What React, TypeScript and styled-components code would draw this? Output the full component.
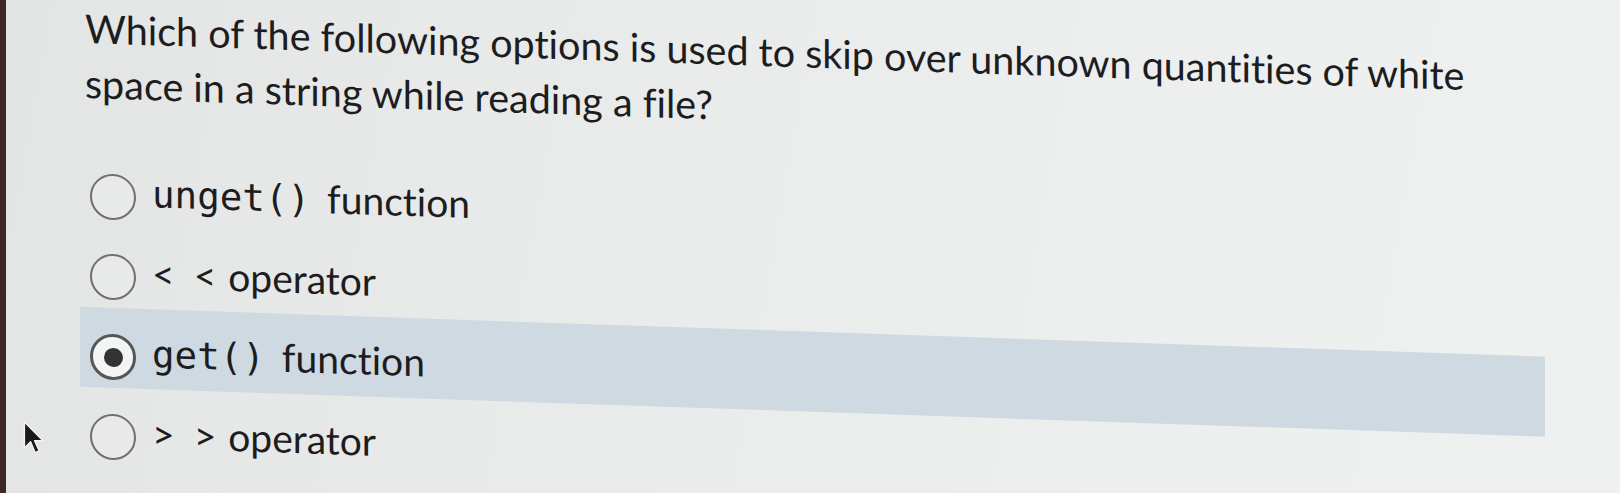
import React from 'react';
import styled, { createGlobalStyle } from 'styled-components';

const GlobalStyle = createGlobalStyle`
  html, body {
    margin: 0;
    padding: 0;
    background: #e8e9e9;
  }
  body {
    font-family: Lato, "Noto Sans", sans-serif;
    font-variant-ligatures: none;
  }
`;

const Page = styled.div`
  position: relative;
  width: 1620px;
  height: 493px;
  overflow: hidden;
  box-sizing: border-box;
  border-left: 6px solid #3f2729;
  background: linear-gradient(100deg, #e3e4e4 0%, #e9eaea 35%, #edeeee 70%, #eff0f0 100%);
`;

const Sheet = styled.div`
  padding-left: 74px;
  transform: skewY(1.95deg);
  transform-origin: 79px 0;
`;

const Question = styled.p`
  margin: 0 0 37px 5px;
  max-width: 1430px;
  font-family: Lato, "Noto Sans", sans-serif;
  font-size: 39.5px;
  line-height: 55px;
  color: #1d1d1f;
  font-variant-ligatures: none;
`;

const Options = styled.div`
  display: flex;
  flex-direction: column;
`;

const Row = styled.div<{ $active?: boolean }>`
  box-sizing: border-box;
  width: 1465px;
  height: 80px;
  display: flex;
  align-items: center;
  gap: 16px;
  padding: 26px 0 8px 10px;
  background: ${(p) => (p.$active ? '#cfd9e2' : 'transparent')};
`;

const Radio = styled.span<{ $checked?: boolean }>`
  box-sizing: border-box;
  flex-shrink: 0;
  width: 46px;
  height: 46px;
  border-radius: 50%;
  border: ${(p) => (p.$checked ? '3px solid #565656' : '2.5px solid #707070')};
  background: ${(p) => (p.$checked ? '#f3f4f4' : 'rgba(255,255,255,0.15)')};
  display: flex;
  align-items: center;
  justify-content: center;
`;

const Dot = styled.span`
  width: 19px;
  height: 19px;
  border-radius: 50%;
  background: #333;
`;

const Label = styled.div`
  padding-bottom: 11px;
  font-family: Lato, "Noto Sans", sans-serif;
  font-size: 39px;
  line-height: 46px;
  color: #1d1d1f;
  white-space: pre;
  font-variant-ligatures: none;
`;

const Code = styled.span`
  margin-right: 7px;
  font-family: "DejaVu Sans Mono", "Liberation Mono", monospace;
  font-size: 37.5px;
`;

const Sym = styled.span<{ $gap: number }>`
  margin-right: ${(p) => p.$gap}px;
`;

const Pointer = styled.svg`
  position: absolute;
  left: 17px;
  top: 421px;
`;

type Option = { code?: string; sym?: string; text: string; checked?: boolean };

const options: Option[] = [
  { code: 'unget()', text: ' function' },
  { sym: '<', text: 'operator' },
  { code: 'get()', text: ' function', checked: true },
  { sym: '>', text: 'operator' },
];

const App = () => (
  <Page>
    <GlobalStyle />
    <Sheet>
      <Question>
        Which of the following options is used to skip over unknown quantities of white space in a string while reading a file?
      </Question>
      <Options>
        {options.map((o, i) => (
          <Row key={i} $active={o.checked}>
            <Radio $checked={o.checked}>{o.checked && <Dot />}</Radio>
            <Label>
              {o.code && <Code>{o.code}</Code>}
              {o.sym && (
                <>
                  <Sym $gap={19}>{o.sym}</Sym>
                  <Sym $gap={12}>{o.sym}</Sym>
                </>
              )}
              {o.text}
            </Label>
          </Row>
        ))}
      </Options>
    </Sheet>
    {/* mouse cursor in the photo */}
    <Pointer width="22" height="36" viewBox="0 0 19 32">
      <path d="M1 1 L1 24 L6.5 18.5 L10.5 28 L14 26.5 L10 17.5 L17.5 17.5 Z" fill="#1a1a1a" stroke="#f4f4f4" strokeWidth="1.2" strokeLinejoin="round" />
    </Pointer>
  </Page>
);

export default App;
